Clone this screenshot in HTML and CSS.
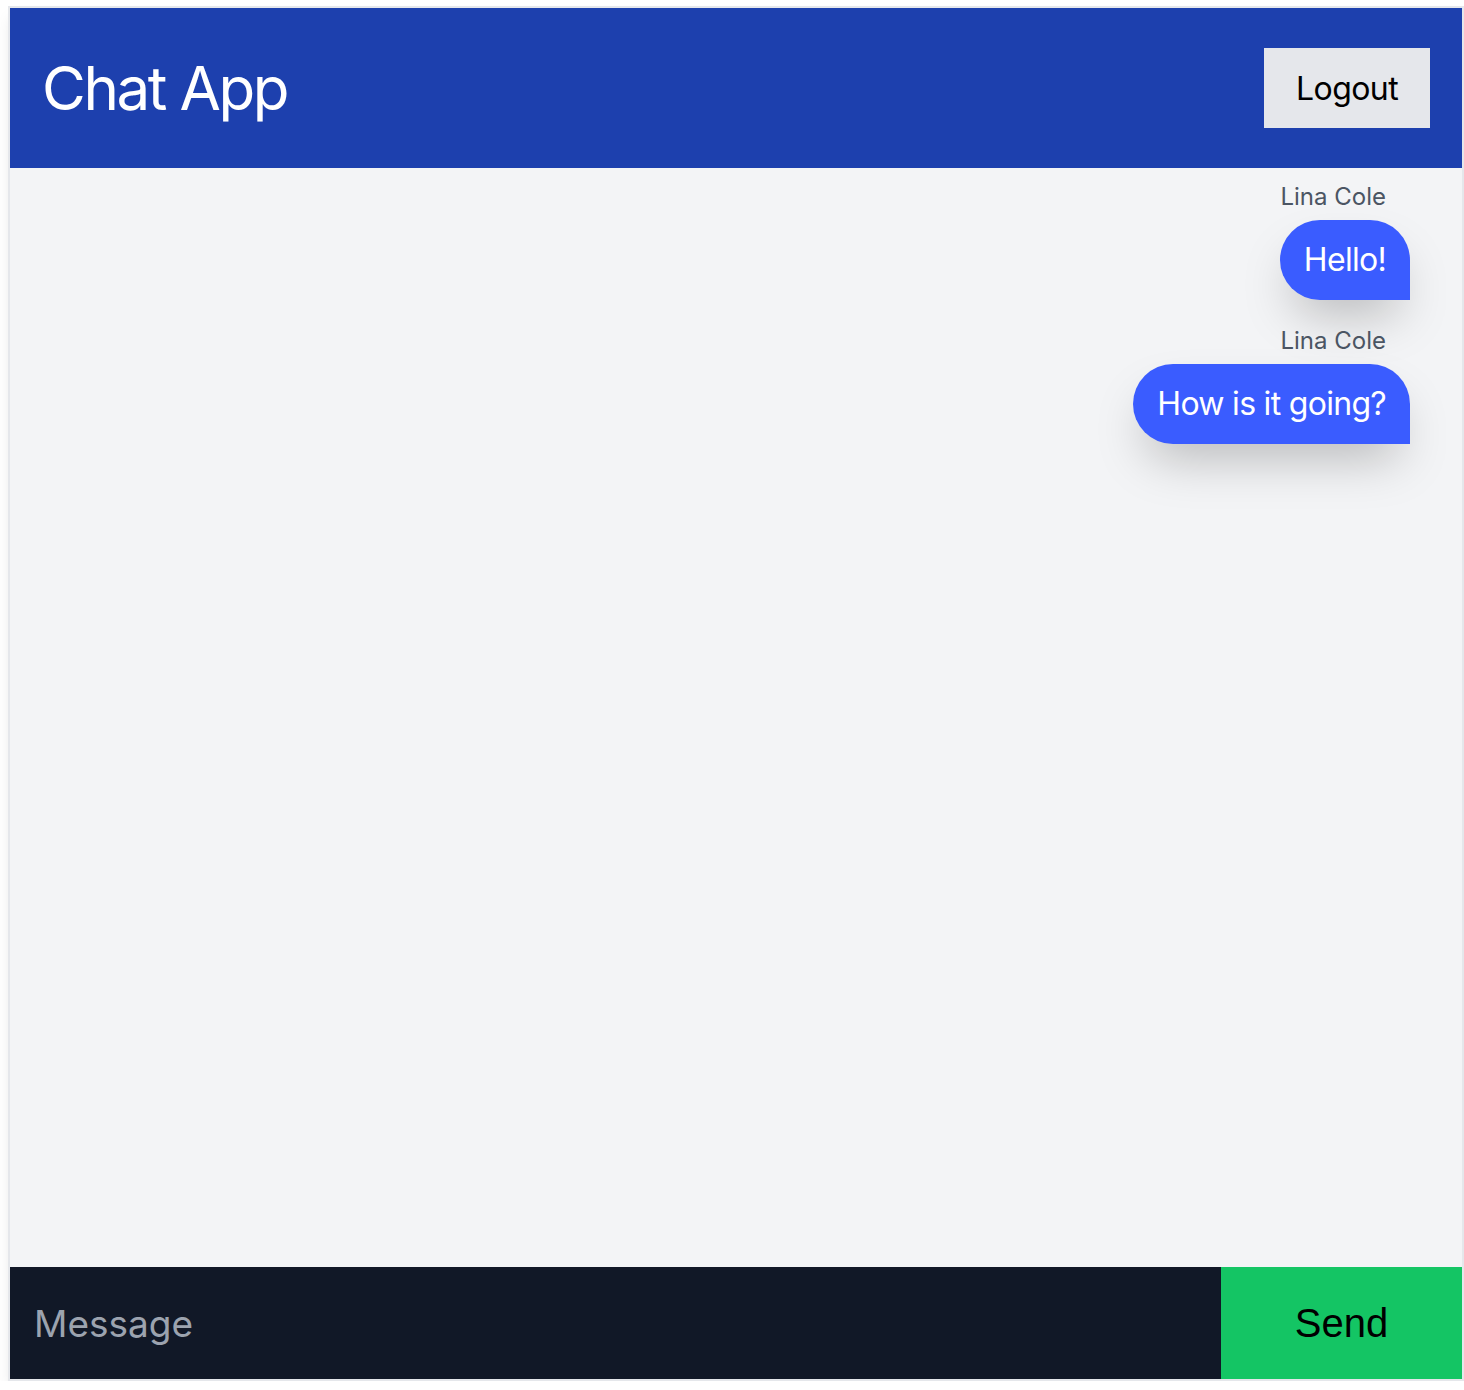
FILE: index.html
```html
<!DOCTYPE html>
<html lang="en">
<head>
<meta charset="utf-8">
<title>Chat App</title>
<link rel="stylesheet" href="styles.css">
</head>
<body>
<div class="app">
  <header class="header">
    <h1 class="title">Chat App</h1>
    <button class="logout">Logout</button>
  </header>
  <main class="messages">
    <div class="message">
      <div class="author">Lina Cole</div>
      <div class="bubble">Hello!</div>
    </div>
    <div class="message">
      <div class="author">Lina Cole</div>
      <div class="bubble">How is it going?</div>
    </div>
  </main>
  <form class="composer">
    <input class="input" type="text" placeholder="Message">
    <button class="send" type="button">Send</button>
  </form>
</div>
</body>
</html>
```

FILE: styles.css
```css
* {
  box-sizing: border-box;
}

html, body {
  margin: 0;
  padding: 0;
  background: #ffffff;
}

body {
  font-family: Inter, "Noto Sans", sans-serif;
  padding: 6px 0 0 8px;
  overflow: hidden;
}

.app {
  width: 1456px;
  height: 1375px;
  border: 2px solid #e5e7eb;
  display: flex;
  flex-direction: column;
  box-shadow: 0 10px 15px -3px rgba(0, 0, 0, 0.1), 0 4px 6px -4px rgba(0, 0, 0, 0.1);
  background: #f3f4f6;
}

.header {
  height: 160px;
  flex: none;
  background: #1d40ae;
  display: flex;
  align-items: center;
  justify-content: space-between;
  padding: 0 32px;
}

.title {
  margin: 0;
  font-size: 60px;
  line-height: 1;
  font-weight: 400;
  letter-spacing: -2.4px;
  color: #ffffff;
}

.logout {
  height: 80px;
  padding: 0 32px;
  border: none;
  border-radius: 0;
  background: #e5e7eb;
  color: #000000;
  font-family: Inter, "Noto Sans", sans-serif;
  font-size: 32px;
  letter-spacing: -0.6px;
  cursor: pointer;
}

.messages {
  flex: 1;
  display: flex;
  flex-direction: column;
  align-items: flex-end;
  gap: 27px;
  padding: 15px 52px 15px 15px;
  background: #f3f4f6;
}

.message {
  display: flex;
  flex-direction: column;
  align-items: flex-end;
}

.author {
  font-size: 24px;
  line-height: 28px;
  color: #4b5563;
  margin: 0 24px 9px 0;
}

.bubble {
  height: 80px;
  line-height: 80px;
  padding: 0 24px;
  font-size: 32px;
  letter-spacing: -0.7px;
  color: #ffffff;
  background: #3a5cff;
  border-radius: 40px 40px 0 40px;
  box-shadow: 0 25px 50px -12px rgba(0, 0, 0, 0.25);
  white-space: nowrap;
}

.composer {
  margin: 0;
  height: 112px;
  flex: none;
  display: flex;
}

.input {
  flex: 1;
  min-width: 0;
  border: none;
  outline: none;
  background: #111827;
  color: #ffffff;
  font-family: Inter, "Noto Sans", sans-serif;
  font-size: 37px;
  padding: 0 24px;
}

.input::placeholder {
  color: #9ca3af;
}

.send {
  width: 241px;
  border: none;
  border-radius: 0;
  background: #14c564;
  color: #000000;
  font-family: "Liberation Sans", Arial, sans-serif;
  font-size: 40px;
  cursor: pointer;
}
```
